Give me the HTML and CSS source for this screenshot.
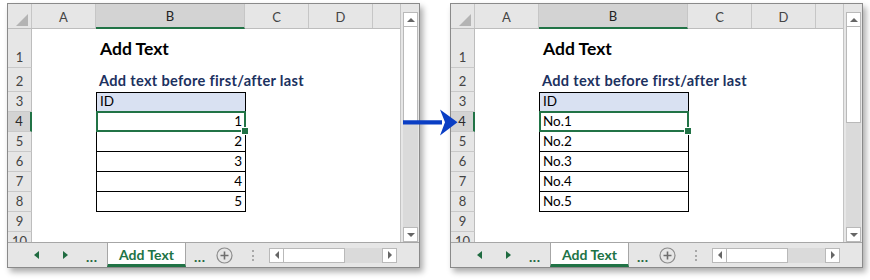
FILE: index.html
```html
<!DOCTYPE html>
<html>
<head>
<meta charset="utf-8">
<link rel="stylesheet" href="styles.css">
</head>
<body>
<div class="stage">
  <div class="sheet">
    <div class="main">
      <div class="grid">
        <div class="colhdr">
          <div class="corner"></div>
          <div class="ch ca">A</div>
          <div class="ch cb sel">B</div>
          <div class="ch cc">C</div>
          <div class="ch cd">D</div>
          <div class="ch rest"></div>
        </div>
        <div class="rows">
          <div class="row r1"><div class="rh">1</div><div class="ca"></div><div class="cell title">Add Text</div></div>
          <div class="row r2"><div class="rh">2</div><div class="ca"></div><div class="cell sub">Add text before first/after last</div></div>
          <div class="row"><div class="rh">3</div><div class="ca"></div><div class="cell tb top idc">ID</div></div>
          <div class="row"><div class="rh hsel">4</div><div class="ca"></div><div class="cell tb num active">1</div></div>
          <div class="row"><div class="rh">5</div><div class="ca"></div><div class="cell tb num">2</div></div>
          <div class="row"><div class="rh">6</div><div class="ca"></div><div class="cell tb num">3</div></div>
          <div class="row"><div class="rh">7</div><div class="ca"></div><div class="cell tb num">4</div></div>
          <div class="row"><div class="rh">8</div><div class="ca"></div><div class="cell tb num">5</div></div>
          <div class="row"><div class="rh">9</div></div>
          <div class="row"><div class="rh">10</div></div>
        </div>
      </div>
      <div class="vscroll">
        <div class="sbtn"><span class="tri up"></span></div>
        <div class="vthumb"></div>
        <div class="vtrack"></div>
        <div class="sbtn"><span class="tri down"></span></div>
      </div>
    </div>
    <div class="tabbar">
      <div class="nav">
        <span class="tri navl"></span>
        <span class="tri navr"></span>
        <span class="dots">...</span>
      </div>
      <div class="tab">Add Text</div>
      <span class="dots after">...</span>
      <span class="plus"><svg width="17" height="17" viewBox="0 0 17 17"><circle cx="8.5" cy="8.5" r="7.5" fill="none" stroke="#8c8c8c" stroke-width="1.2"/><path d="M8.5 4.5v8M4.5 8.5h8" stroke="#6e6e6e" stroke-width="1.6"/></svg></span>
      <span class="grip"></span>
      <div class="hscroll">
        <div class="hbtn"><span class="tri hl"></span></div>
        <div class="hthumb"></div>
        <div class="htrack"></div>
        <div class="hbtn"><span class="tri hr"></span></div>
      </div>
    </div>
  </div>

  <svg class="arrow" width="56" height="32" viewBox="0 0 56 32">
    <path d="M0 14.2h39v4.2H0z" fill="#0a3ec4"/>
    <path d="M37 3.5L54.5 16.3 37 29.5 42 16.3z" fill="#0a3ec4"/>
  </svg>

  <div class="sheet">
    <div class="main">
      <div class="grid">
        <div class="colhdr">
          <div class="corner"></div>
          <div class="ch ca">A</div>
          <div class="ch cb sel">B</div>
          <div class="ch cc">C</div>
          <div class="ch cd">D</div>
          <div class="ch rest"></div>
        </div>
        <div class="rows">
          <div class="row r1"><div class="rh">1</div><div class="ca"></div><div class="cell title">Add Text</div></div>
          <div class="row r2"><div class="rh">2</div><div class="ca"></div><div class="cell sub">Add text before first/after last</div></div>
          <div class="row"><div class="rh">3</div><div class="ca"></div><div class="cell tb top idc">ID</div></div>
          <div class="row"><div class="rh hsel">4</div><div class="ca"></div><div class="cell tb txt active">No.1</div></div>
          <div class="row"><div class="rh">5</div><div class="ca"></div><div class="cell tb txt">No.2</div></div>
          <div class="row"><div class="rh">6</div><div class="ca"></div><div class="cell tb txt">No.3</div></div>
          <div class="row"><div class="rh">7</div><div class="ca"></div><div class="cell tb txt">No.4</div></div>
          <div class="row"><div class="rh">8</div><div class="ca"></div><div class="cell tb txt">No.5</div></div>
          <div class="row"><div class="rh">9</div></div>
          <div class="row"><div class="rh">10</div></div>
        </div>
      </div>
      <div class="vscroll">
        <div class="sbtn"><span class="tri up"></span></div>
        <div class="vthumb"></div>
        <div class="vtrack"></div>
        <div class="sbtn"><span class="tri down"></span></div>
      </div>
    </div>
    <div class="tabbar">
      <div class="nav">
        <span class="tri navl"></span>
        <span class="tri navr"></span>
        <span class="dots">...</span>
      </div>
      <div class="tab">Add Text</div>
      <span class="dots after">...</span>
      <span class="plus"><svg width="17" height="17" viewBox="0 0 17 17"><circle cx="8.5" cy="8.5" r="7.5" fill="none" stroke="#8c8c8c" stroke-width="1.2"/><path d="M8.5 4.5v8M4.5 8.5h8" stroke="#6e6e6e" stroke-width="1.6"/></svg></span>
      <span class="grip"></span>
      <div class="hscroll">
        <div class="hbtn"><span class="tri hl"></span></div>
        <div class="hthumb"></div>
        <div class="htrack"></div>
        <div class="hbtn"><span class="tri hr"></span></div>
      </div>
    </div>
  </div>
</div>
</body>
</html>
```

FILE: styles.css
```css
* { box-sizing: border-box; }
html, body { margin: 0; padding: 0; background: #fff; }
body {
  width: 870px;
  height: 280px;
  overflow: hidden;
  font-family: "Lato", "Open Sans", sans-serif;
  color: #000;
}
.stage {
  position: relative;
  display: flex;
  gap: 30px;
  padding: 3px 0 0 7px;
}
.sheet {
  width: 413px;
  height: 265px;
  border: 1px solid #8a8a8a;
  background: #e6e6e6;
  display: flex;
  flex-direction: column;
  box-shadow: 3px 4px 6px rgba(0, 0, 0, 0.33);
}
.main {
  display: flex;
  height: 238px;
}
.grid {
  width: 393px;
  background: #fff;
  border-right: 1px solid #c4c4c4;
  overflow: hidden;
}
.colhdr {
  display: flex;
  height: 25px;
  background: #e6e6e6;
  border-bottom: 1px solid #bdbdbd;
}
.corner {
  width: 24px;
  flex: none;
  border-right: 1px solid #c6c6c6;
  position: relative;
}
.corner::after {
  content: "";
  position: absolute;
  right: 3px;
  bottom: 2px;
  width: 0;
  height: 0;
  border-left: 12px solid transparent;
  border-bottom: 12px solid #b4b4b4;
}
.ch {
  flex: none;
  display: flex;
  align-items: center;
  justify-content: center;
  font-size: 13px;
  color: #444;
  border-right: 1px solid #c6c6c6;
  padding-top: 1px;
}
.ca { width: 64px; flex: none; }
.cb { width: 149px; }
.cc { width: 64px; }
.cd { width: 64px; }
.ch.rest { flex: 1; border-right: none; }
.ch.sel {
  background: #d3d3d3;
  border-bottom: 2px solid #217346;
  margin-bottom: -1px;
  color: #222;
}
.rows { display: flex; flex-direction: column; }
.row { display: flex; height: 20px; flex: none; }
.row.r1 { height: 39px; }
.row.r2 { height: 24px; }
.rh {
  width: 24px;
  flex: none;
  background: #e6e6e6;
  border-right: 1px solid #bdbdbd;
  border-bottom: 1px solid #c9c9c9;
  display: flex;
  align-items: flex-end;
  justify-content: center;
  font-size: 13px;
  line-height: 16px;
  padding-bottom: 2px;
  color: #444;
}
.rh.hsel {
  background: #d3d3d3;
  border-right: 2px solid #217346;
  color: #2a2a2a;
}
.cell {
  width: 150px;
  flex: none;
  display: flex;
  align-items: flex-end;
  position: relative;
  white-space: nowrap;
  font-size: 13.5px;
  line-height: 17px;
}
.title {
  font-weight: 700;
  font-size: 17.5px;
  padding: 0 0 11px 4px;
}
.sub {
  font-weight: 700;
  font-size: 14.6px;
  letter-spacing: 0.3px;
  color: #1c3160;
  padding: 0 0 3px 3px;
}
.tb {
  border-left: 1px solid #000;
  border-right: 1px solid #000;
  border-bottom: 1px solid #000;
  padding: 0 3px 1px 3px;
}
.tb.top { border-top: 1px solid #000; }
.idc { background: #d9e1f2; }
.num { justify-content: flex-end; }
.active::after {
  content: "";
  position: absolute;
  left: -1px;
  top: -1px;
  right: -1px;
  bottom: -1px;
  border: 2px solid #217346;
}
.active::before {
  content: "";
  position: absolute;
  right: -4px;
  bottom: -4px;
  width: 6px;
  height: 6px;
  background: #217346;
  border: 1px solid #fff;
  z-index: 2;
}
.vscroll {
  width: 18px;
  flex: none;
  display: flex;
  flex-direction: column;
  padding: 8px 0 0 2px;
}
.sbtn {
  width: 15px;
  height: 15px;
  flex: none;
  background: #fff;
  border: 1px solid #b9b9b9;
  display: flex;
  align-items: center;
  justify-content: center;
}
.vthumb {
  width: 15px;
  height: 96px;
  flex: none;
  background: #fff;
  border: 1px solid #b9b9b9;
  border-top: none;
}
.vtrack {
  width: 15px;
  flex: 1;
  background: #dadada;
}
.tri { display: block; width: 0; height: 0; }
.tri.up {
  border-left: 4px solid transparent;
  border-right: 4px solid transparent;
  border-bottom: 4px solid #666;
}
.tri.down {
  border-left: 4px solid transparent;
  border-right: 4px solid transparent;
  border-top: 4px solid #666;
}
.tri.hl {
  border-top: 4px solid transparent;
  border-bottom: 4px solid transparent;
  border-right: 4px solid #666;
}
.tri.hr {
  border-top: 4px solid transparent;
  border-bottom: 4px solid transparent;
  border-left: 4px solid #666;
}
.tabbar {
  flex: 1;
  display: flex;
  align-items: center;
  border-top: 1px solid #a6a6a6;
  background: #e6e6e6;
}
.nav {
  width: 99px;
  flex: none;
  display: flex;
  align-items: center;
  padding-left: 26px;
  align-self: stretch;
}
.tri.navl {
  border-top: 4px solid transparent;
  border-bottom: 4px solid transparent;
  border-right: 5px solid #1f6b40;
}
.tri.navr {
  border-top: 4px solid transparent;
  border-bottom: 4px solid transparent;
  border-left: 5px solid #1f6b40;
  margin-left: 24px;
}
.dots {
  font-weight: 700;
  font-size: 14px;
  color: #1f6b40;
  letter-spacing: 0.5px;
  line-height: 14px;
  margin-left: 18px;
  padding-top: 4px;
}
.tab {
  width: 79px;
  flex: none;
  align-self: stretch;
  background: #fff;
  border-left: 1px solid #a6a6a6;
  border-right: 1px solid #a6a6a6;
  border-bottom: 3px solid #217346;
  display: flex;
  align-items: center;
  justify-content: center;
  font-weight: 700;
  font-size: 14px;
  color: #217346;
  padding-top: 1px;
}
.dots.after { margin-left: 8px; }
.plus { display: block; margin-left: 11px; height: 17px; }
.grip {
  width: 2px;
  height: 11px;
  margin-left: 19px;
  background: repeating-linear-gradient(to bottom, #a8a8a8 0 2px, transparent 2px 4.5px);
}
.hscroll {
  display: flex;
  margin-left: 15px;
  height: 15px;
}
.hbtn {
  width: 15px;
  height: 15px;
  background: #fff;
  border: 1px solid #b9b9b9;
  display: flex;
  align-items: center;
  justify-content: center;
}
.hthumb {
  width: 61px;
  background: #fff;
  border: 1px solid #b9b9b9;
  border-left: none;
}
.htrack {
  width: 37px;
  background: #dadada;
}
.arrow {
  position: absolute;
  left: 403px;
  top: 106px;
}
```
